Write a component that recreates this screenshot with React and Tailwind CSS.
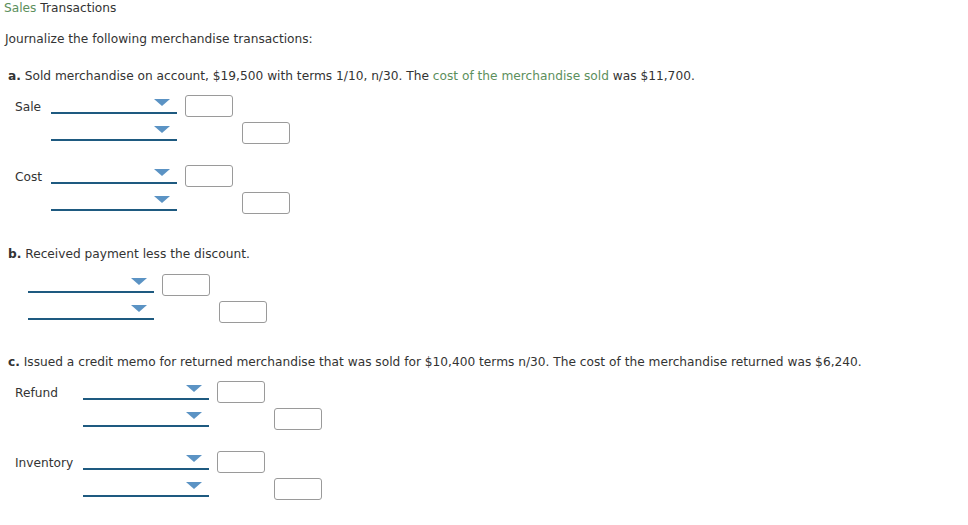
const font = { fontFamily: '"DejaVu Sans", Verdana, sans-serif' };

function Select() {
  return (
    <div className="relative w-[126px] h-[19px] border-b-2 border-[#1e5a80] shrink-0">
      <div className="absolute right-[7px] top-[4px] w-0 h-0 border-l-[8px] border-r-[8px] border-t-[7px] border-l-transparent border-r-transparent border-t-[#5b93c4]" />
    </div>
  );
}

function Box({ credit }) {
  return (
    <div
      className={
        "w-[48px] h-[22px] border border-[#9a9a9a] rounded-[3px] bg-white shrink-0 " +
        (credit ? "ml-[65px]" : "ml-2")
      }
    />
  );
}

function Entry({ label, labelWidth, className = "" }) {
  return (
    <div className={className}>
      <div className="flex items-start">
        <div className="pt-[4px] leading-4 shrink-0" style={{ width: labelWidth }}>
          {label}
        </div>
        <Select />
        <Box />
      </div>
      <div className="flex items-start mt-[5px]">
        <div className="shrink-0" style={{ width: labelWidth }} />
        <Select />
        <Box credit />
      </div>
    </div>
  );
}

export default function App() {
  return (
    <div className="bg-white min-h-screen text-[12.2px] text-[#333]" style={font}>
      <div className="pl-[4px] leading-4">
        <span className="text-[#5c8f5c]">Sales</span> Transactions
      </div>
      <div className="pl-[5px] mt-[15px] leading-4">
        Journalize the following merchandise transactions:
      </div>

      <div className="pl-[8px] mt-[21px] leading-4">
        <span className="font-bold">a.</span> Sold merchandise on account, $19,500 with terms 1/10, n/30. The{" "}
        <span className="text-[#5c8f5c]">cost of the merchandise sold</span> was $11,700.
      </div>
      <div className="pl-[15px] mt-[11px]">
        <Entry label="Sale" labelWidth={36} />
        <Entry label="Cost" labelWidth={36} className="mt-[21px]" />
      </div>

      <div className="pl-[8px] mt-[32px] leading-4">
        <span className="font-bold">b.</span> Received payment less the discount.
      </div>
      <div className="pl-[15px] mt-[12px]">
        <Entry label="" labelWidth={13} />
      </div>

      <div className="pl-[8px] mt-[31px] leading-4">
        <span className="font-bold">c.</span> Issued a credit memo for returned merchandise that was sold for $10,400 terms n/30. The cost of the merchandise returned was $6,240.
      </div>
      <div className="pl-[15px] mt-[11px]">
        <Entry label="Refund" labelWidth={68} />
        <Entry label="Inventory" labelWidth={68} className="mt-[21px]" />
      </div>
    </div>
  );
}
